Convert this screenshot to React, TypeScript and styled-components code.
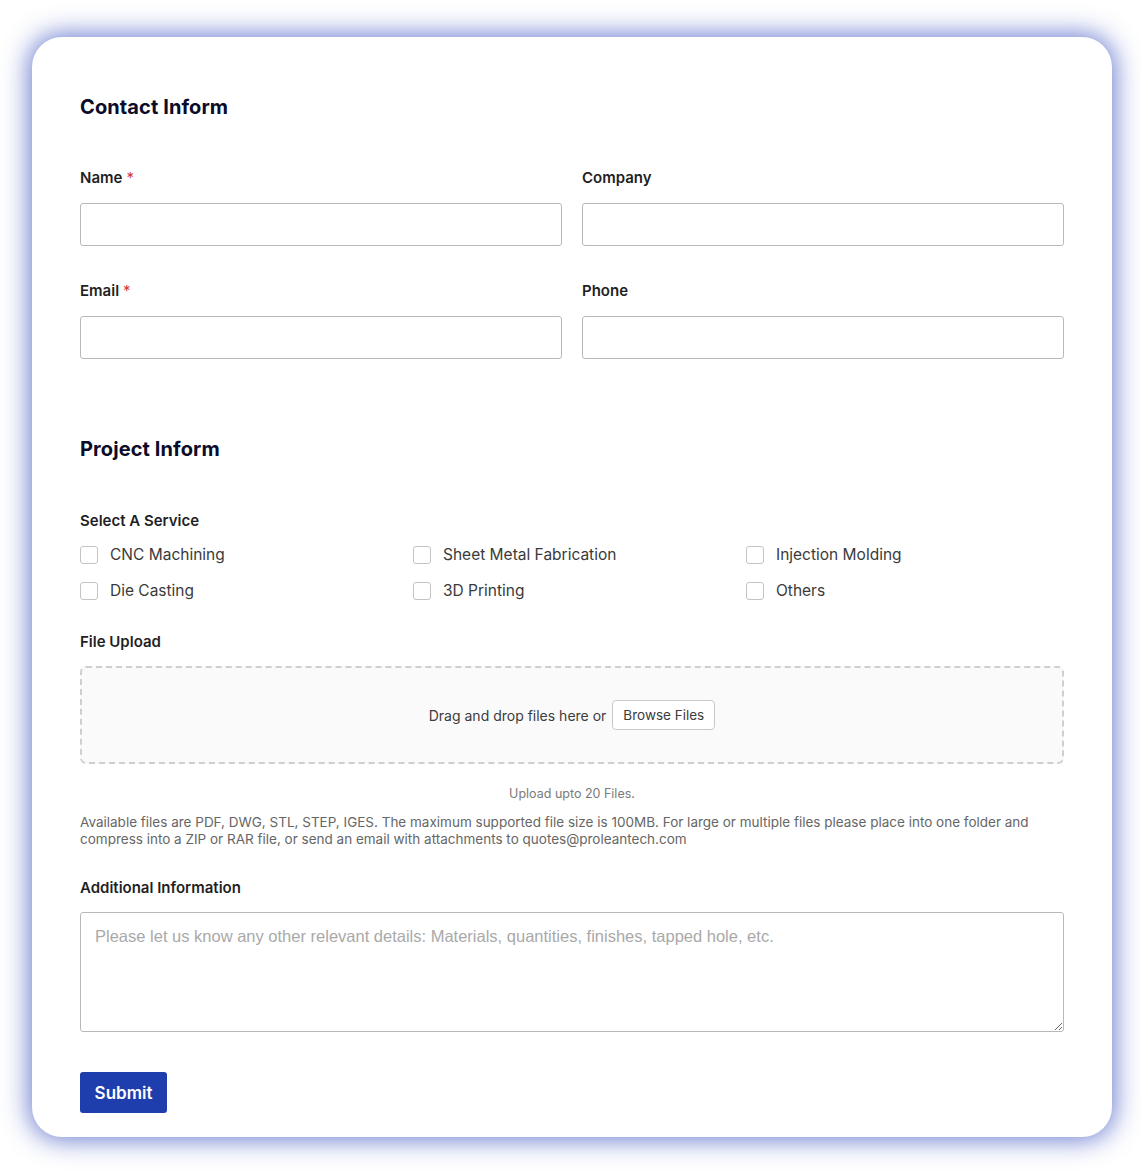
import styled, { createGlobalStyle } from "styled-components";

const GlobalStyle = createGlobalStyle`
  html, body {
    margin: 0;
    padding: 0;
    background: #ffffff;
  }
  body {
    font-family: "Inter", "Noto Sans", sans-serif;
    color: #222;
  }
  * {
    box-sizing: border-box;
  }
`;

const Page = styled.div`
  padding: 37px 29px 38px 32px;
`;

const Card = styled.form`
  width: 1080px;
  height: 1100px;
  background: #fff;
  border-radius: 30px;
  box-shadow: 0 0 26px 3px rgba(40, 65, 185, 0.68);
  padding: 56px 48px 0 48px;
  display: flex;
  flex-direction: column;
`;

const SectionTitle = styled.h2<{ $top?: number }>`
  margin: ${(p) => p.$top ?? 0}px 0 0 0;
  font-size: 20px;
  font-weight: 700;
  line-height: 28px;
  color: #0b0b2a;
  letter-spacing: 0.1px;
`;

const FieldGrid = styled.div`
  display: grid;
  grid-template-columns: 1fr 1fr;
  column-gap: 20px;
  row-gap: 35px;
  margin-top: 47px;
`;

const Field = styled.div`
  display: flex;
  flex-direction: column;
`;

const Label = styled.label<{ $top?: number }>`
  display: block;
  font-size: 15px;
  font-weight: 600;
  line-height: 20px;
  color: #1f1f25;
  margin-top: ${(p) => p.$top ?? 0}px;
`;

const Required = styled.span`
  color: #d0383a;
  margin-left: 4px;
  font-weight: 400;
`;

const TextInput = styled.input`
  margin-top: 15px;
  height: 43px;
  width: 100%;
  border: 1px solid #b9b9b9;
  border-radius: 3px;
  background: #fff;
  padding: 0 12px;
  font-size: 15px;
  outline: none;
`;

const ServiceGrid = styled.div`
  display: grid;
  grid-template-columns: repeat(3, 318px);
  column-gap: 15px;
  row-gap: 16px;
  margin-top: 14px;
`;

const CheckRow = styled.label`
  display: flex;
  align-items: center;
  gap: 12px;
  font-size: 15.5px;
  line-height: 20px;
  color: #3a3a3a;
  cursor: pointer;
`;

const CheckBox = styled.span`
  width: 18px;
  height: 18px;
  border: 1px solid #c4c4c4;
  border-radius: 3px;
  background: #fff;
  flex-shrink: 0;
`;

const DropZone = styled.div`
  margin-top: 14px;
  height: 98px;
  border: 2px dashed #cfcfcf;
  border-radius: 6px;
  background: #fafafa;
  display: flex;
  align-items: center;
  justify-content: center;
  gap: 6px;
  font-size: 14px;
  color: #3c3c3c;
`;

const BrowseButton = styled.button`
  height: 30px;
  padding: 0 10px;
  border: 1px solid #c9c9c9;
  border-radius: 4px;
  background: #fff;
  font-family: inherit;
  font-size: 13.5px;
  color: #3c3c3c;
  cursor: pointer;
`;

const UploadNote = styled.div`
  margin-top: 22px;
  text-align: center;
  font-size: 12.5px;
  line-height: 16px;
  color: #7a7a7a;
`;

const HelpText = styled.p`
  margin: 12px 0 0 0;
  font-size: 13.5px;
  line-height: 17px;
  color: #666;
`;

const TextArea = styled.textarea`
  margin-top: 14px;
  width: 100%;
  height: 120px;
  border: 1px solid #b9b9b9;
  border-radius: 3px;
  padding: 14px 14px;
  font-family: "Liberation Sans", Arial, sans-serif;
  font-size: 16.5px;
  line-height: 19px;
  resize: vertical;
  outline: none;
  &::placeholder {
    color: #a9a9a9;
  }
`;

const SubmitButton = styled.button`
  margin-top: 40px;
  align-self: flex-start;
  width: 87px;
  height: 41px;
  border: none;
  border-radius: 3px;
  background: #1f3eae;
  color: #fff;
  font-family: inherit;
  font-size: 17px;
  font-weight: 600;
  cursor: pointer;
`;

const services = [
  "CNC Machining",
  "Sheet Metal Fabrication",
  "Injection Molding",
  "Die Casting",
  "3D Printing",
  "Others",
];

export default function App() {
  return (
    <Page>
      <GlobalStyle />
      <Card onSubmit={(e) => e.preventDefault()}>
        <SectionTitle>Contact Inform</SectionTitle>
        <FieldGrid>
          <Field>
            <Label>
              Name<Required>*</Required>
            </Label>
            <TextInput />
          </Field>
          <Field>
            <Label>Company</Label>
            <TextInput />
          </Field>
          <Field>
            <Label>
              Email<Required>*</Required>
            </Label>
            <TextInput />
          </Field>
          <Field>
            <Label>Phone</Label>
            <TextInput />
          </Field>
        </FieldGrid>

        <SectionTitle $top={76}>Project Inform</SectionTitle>

        <Label $top={48}>Select A Service</Label>
        <ServiceGrid>
          {services.map((s) => (
            <CheckRow key={s}>
              <CheckBox />
              {s}
            </CheckRow>
          ))}
        </ServiceGrid>

        <Label $top={31}>File Upload</Label>
        <DropZone>
          Drag and drop files here or
          <BrowseButton type="button">Browse Files</BrowseButton>
        </DropZone>
        <UploadNote>Upload upto 20 Files.</UploadNote>
        <HelpText>
          Available files are PDF, DWG, STL, STEP, IGES. The maximum supported
          file size is 100MB. For large or multiple files please place into one
          folder and compress into a ZIP or RAR file, or send an email with
          attachments to quotes@proleantech.com
        </HelpText>

        <Label $top={30}>Additional Information</Label>
        <TextArea placeholder="Please let us know any other relevant details: Materials, quantities, finishes, tapped hole, etc." />

        <SubmitButton type="submit">Submit</SubmitButton>
      </Card>
    </Page>
  );
}
